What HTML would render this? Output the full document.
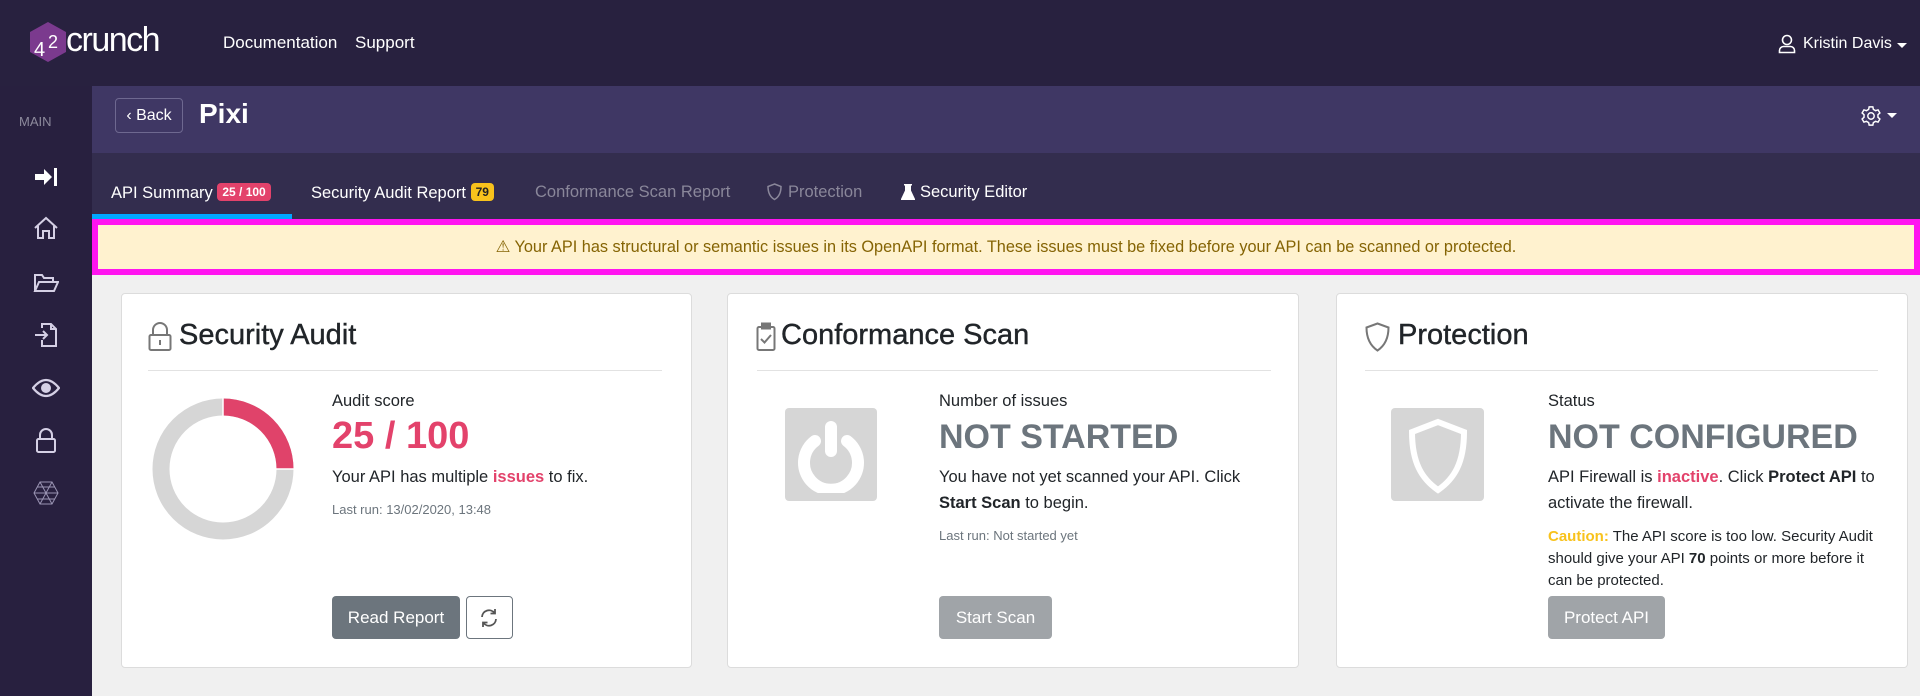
<!DOCTYPE html>
<html><head><meta charset="utf-8"><style>
*{box-sizing:border-box;margin:0;padding:0}
body{width:1920px;height:696px;overflow:hidden;font-family:"Liberation Sans",sans-serif;background:#f0f0f0;position:relative;color:#212529}
.a{position:absolute}
.top{left:0;top:0;width:1920px;height:86px;background:#28213f}
.side{left:0;top:86px;width:92px;height:610px;background:#28203f}
.ph{left:92px;top:86px;width:1828px;height:67px;background:#3f3764}
.tabs{left:92px;top:153px;width:1828px;height:66px;background:#332d4e}
.nav{color:#fff;font-size:17px;top:33px}
.tab{font-size:16.5px;top:183px;white-space:nowrap}
.badge{display:inline-block;font-size:12px;font-weight:bold;padding:2px 5px;border-radius:4px;vertical-align:2px}
.warn{left:92px;top:219px;width:1828px;height:56px;border:6px solid #ff14f0;background:#fff2cf;color:#856404;font-size:16.3px;text-align:center;line-height:44px;white-space:nowrap}
.card{top:293px;height:375px;background:#fff;border:1px solid #dcdcdc;border-radius:4px}
.ttl{font-size:29px;top:319px;white-space:nowrap;-webkit-text-stroke:0.4px #212529}
.hr{top:370px;height:1px;background:#e2e2e2}
.t16{font-size:16.5px;white-space:nowrap}
.big{font-size:34px;font-weight:bold;color:#6c757d;top:418px;white-space:nowrap}
.small{font-size:13px;color:#6c757d;white-space:nowrap}
.btn{top:596px;height:43px;border-radius:4px;color:#fff;font-size:17px;text-align:center;line-height:43px}
.box{top:408px;width:92px;height:93px;background:#d6d6d6;border-radius:4px}
</style></head><body>
<div class="a top"></div>
<svg class="a" style="left:28px;top:21px" width="40" height="42" viewBox="0 0 40 42"><polygon points="20,1 38,11 38,31 20,41 2,31 2,11" fill="#7b3a8e"/><text x="6" y="35" font-family="Liberation Sans" font-size="20" fill="#fff">4</text><text x="20" y="27" font-family="Liberation Sans" font-size="18" fill="#fff">2</text></svg>
<div class="a" style="left:66px;top:21px;color:#fff;font-size:34px;letter-spacing:-1.5px">crunch</div>
<div class="a nav" style="left:223px">Documentation</div>
<div class="a nav" style="left:355px">Support</div>
<svg class="a" style="left:1778px;top:34px" width="18" height="20" viewBox="0 0 18 20" fill="none" stroke="#fff" stroke-width="1.6"><circle cx="9" cy="6" r="4.5"/><path d="M1.5 18.5v-2a4 4 0 0 1 4-4h7a4 4 0 0 1 4 4v2z"/></svg>
<div class="a" style="left:1803px;top:35px;color:#fff;font-size:16px">Kristin Davis</div>
<div class="a" style="left:1897px;top:43px;border:5px solid transparent;border-top:5px solid #fff"></div>
<div class="a side"></div>
<div class="a" style="left:19px;top:114px;color:#8d8a9c;font-size:13px">MAIN</div>
<svg class="a" style="left:33px;top:166px" width="26" height="22" viewBox="0 0 26 22"><path d="M2 8h9V3l8 8-8 8v-5H2z" fill="#fff"/><rect x="21" y="2" width="3" height="18" fill="#fff"/></svg>
<svg class="a" style="left:33px;top:216px" width="26" height="24" viewBox="0 0 26 24" fill="none" stroke="#d5d0e5" stroke-width="2"><path d="M2 12L13 2l11 10M5 10v12h5v-7h6v7h5V10"/></svg>
<svg class="a" style="left:33px;top:272px" width="26" height="22" viewBox="0 0 26 22" fill="none" stroke="#d5d0e5" stroke-width="2"><path d="M2 19V3h7l2 3h9v4M2 19l4-9h19l-4 9z"/></svg>
<svg class="a" style="left:34px;top:322px" width="24" height="26" viewBox="0 0 24 26" fill="none" stroke="#d5d0e5" stroke-width="2"><path d="M8 6V2h9l5 5v17H8v-6M17 2v5h5M1 13h12M9 9l4 4-4 4"/></svg>
<svg class="a" style="left:32px;top:378px" width="28" height="20" viewBox="0 0 28 20"><path d="M1 10Q14-6 27 10Q14 26 1 10z" fill="none" stroke="#d5d0e5" stroke-width="2.2"/><circle cx="14" cy="10" r="5" fill="#d5d0e5"/></svg>
<svg class="a" style="left:35px;top:428px" width="22" height="26" viewBox="0 0 22 26" fill="none" stroke="#d5d0e5" stroke-width="2"><path d="M5 11V7a6 6 0 0 1 12 0v4"/><rect x="2" y="11" width="18" height="13" rx="1.5"/></svg>
<svg class="a" style="left:33px;top:481px" width="26" height="24" viewBox="0 0 26 24" fill="none" stroke="#9a94b3" stroke-width="1"><polygon points="7,1 19,1 25,12 19,23 7,23 1,12"/><path d="M7 1l12 22M19 1L7 23M1 12h24M4 6h18M4 18h18"/></svg>
<div class="a ph"></div>
<div class="a" style="left:115px;top:98px;width:68px;height:35px;border:1px solid #6e6890;border-radius:4px;color:#fff;font-size:16px;line-height:33px;text-align:center">‹ Back</div>
<div class="a" style="left:199px;top:98px;color:#fff;font-size:28px;font-weight:bold">Pixi</div>
<svg class="a" style="left:1860px;top:105px" width="22" height="22" viewBox="0 0 24 24" fill="none" stroke="#fff" stroke-width="1.6"><circle cx="12" cy="12" r="3.5"/><path d="M10 2h4l.6 2.8 2.4 1.4 2.7-.9 2 3.4-2.1 1.9v2.8l2.1 1.9-2 3.4-2.7-.9-2.4 1.4L14 22h-4l-.6-2.8-2.4-1.4-2.7.9-2-3.4 2.1-1.9v-2.8L2.3 8.7l2-3.4 2.7.9 2.4-1.4z"/></svg>
<div class="a" style="left:1887px;top:113px;border:5px solid transparent;border-top:5px solid #fff"></div>
<div class="a tabs"></div>
<div class="a tab" style="left:111px;color:#fff">API Summary <span class="badge" style="background:#e3426b;color:#fff">25 / 100</span></div>
<div class="a" style="left:92px;top:214px;width:200px;height:5px;background:#00a8ff"></div>
<div class="a tab" style="left:311px;color:#fff">Security Audit Report <span class="badge" style="background:#f8c21c;color:#222">79</span></div>
<div class="a tab" style="left:535px;color:#8a879a">Conformance Scan Report</div>
<svg class="a" style="left:767px;top:183px" width="15" height="18" viewBox="0 0 15 18" fill="none" stroke="#8a879a" stroke-width="1.5"><path d="M7.5 1L14 3.5c0 7-3 11-6.5 13C4 14.5 1 10.5 1 3.5z"/></svg>
<div class="a tab" style="left:788px;color:#8a879a">Protection</div>
<svg class="a" style="left:901px;top:183px" width="14" height="18" viewBox="0 0 14 18"><path d="M3 1h8v1.5H10v5l4 8.5v1H0v-1l4-8.5v-5H3z" fill="#fff"/></svg>
<div class="a tab" style="left:920px;color:#fff">Security Editor</div>
<div class="a warn">⚠ Your API has structural or semantic issues in its OpenAPI format. These issues must be fixed before your API can be scanned or protected.</div>

<div class="a card" style="left:121px;width:571px"></div>
<svg class="a" style="left:148px;top:322px" width="24" height="30" viewBox="0 0 24 30" fill="none" stroke="#777" stroke-width="2"><path d="M5 13V8a7 7 0 0 1 14 0v5"/><rect x="1.5" y="13" width="21" height="15" rx="1.5"/><path d="M12 18v5"/></svg>
<div class="a ttl" style="left:179px">Security Audit</div>
<div class="a hr" style="left:148px;width:514px"></div>
<svg class="a" style="left:152px;top:398px" width="142" height="142" viewBox="0 0 142 142"><circle cx="71" cy="71" r="62" fill="none" stroke="#d6d6d6" stroke-width="17"/><path d="M71 9A62 62 0 0 1 133 71" fill="none" stroke="#e0436a" stroke-width="17"/><path d="M71 0v20M122 71h20" stroke="#fff" stroke-width="1.5"/></svg>
<div class="a t16" style="left:332px;top:392px">Audit score</div>
<div class="a" style="left:332px;top:415px;font-size:38px;font-weight:bold;color:#e3426b">25 / 100</div>
<div class="a t16" style="left:332px;top:468px">Your API has multiple <b style="color:#e3426b">issues</b> to fix.</div>
<div class="a small" style="left:332px;top:502px">Last run: 13/02/2020, 13:48</div>
<div class="a btn" style="left:332px;width:128px;background:#6c757d">Read Report</div>
<div class="a" style="left:466px;top:596px;width:47px;height:43px;border:1px solid #6c757d;border-radius:4px"></div>
<svg class="a" style="left:479px;top:608px" width="20" height="20" viewBox="0 0 20 20" fill="none" stroke="#555" stroke-width="1.8"><path d="M3 9a7 7 0 0 1 12.5-4M17 11a7 7 0 0 1-12.5 4"/><path d="M16 1v4.5h-4.5M4 19v-4.5h4.5"/></svg>

<div class="a card" style="left:727px;width:572px"></div>
<svg class="a" style="left:756px;top:322px" width="20" height="30" viewBox="0 0 20 30" fill="none" stroke="#777" stroke-width="2"><rect x="1.5" y="5" width="17" height="23" rx="1.5"/><rect x="6" y="1.5" width="8" height="5" fill="#777"/><path d="M5 17l3.5 3.5L15 13"/></svg>
<div class="a ttl" style="left:781px">Conformance Scan</div>
<div class="a hr" style="left:757px;width:514px"></div>
<div class="a box" style="left:785px"></div>
<svg class="a" style="left:796px;top:417px" width="70" height="76" viewBox="0 0 70 76" fill="none" stroke="#fff" stroke-width="12" stroke-linecap="round"><path d="M19 24a27 27 0 1 0 32 0"/><path d="M35 10v24"/></svg>
<div class="a t16" style="left:939px;top:392px">Number of issues</div>
<div class="a big" style="left:939px">NOT STARTED</div>
<div class="a t16" style="left:939px;top:468px">You have not yet scanned your API. Click</div>
<div class="a t16" style="left:939px;top:494px"><b>Start Scan</b> to begin.</div>
<div class="a small" style="left:939px;top:528px">Last run: Not started yet</div>
<div class="a btn" style="left:939px;width:113px;background:#a0a4a8">Start Scan</div>

<div class="a card" style="left:1336px;width:572px"></div>
<svg class="a" style="left:1365px;top:322px" width="25" height="30" viewBox="0 0 25 30" fill="none" stroke="#777" stroke-width="2"><path d="M12.5 1.5L23.5 5.5c0 12-5 19-11 23C6.5 24.5 1.5 17.5 1.5 5.5z"/></svg>
<div class="a ttl" style="left:1398px">Protection</div>
<div class="a hr" style="left:1365px;width:513px"></div>
<div class="a box" style="left:1391px;width:93px"></div>
<svg class="a" style="left:1407px;top:418px" width="62" height="78" viewBox="0 0 62 78" fill="none" stroke="#fff" stroke-width="6"><path d="M31 4L57 14c0 31-10 47-26 58C15 61 5 45 5 14z"/></svg>
<div class="a t16" style="left:1548px;top:392px">Status</div>
<div class="a big" style="left:1548px">NOT CONFIGURED</div>
<div class="a t16" style="left:1548px;top:468px">API Firewall is <b style="color:#e3426b">inactive</b>. Click <b>Protect API</b> to</div>
<div class="a t16" style="left:1548px;top:494px">activate the firewall.</div>
<div class="a" style="left:1548px;top:526px;font-size:15px;line-height:22px;width:335px">
<b style="color:#f8c21c">Caution:</b> The API score is too low. Security Audit should give your API <b>70</b> points or more before it can be protected.</div>
<div class="a btn" style="left:1548px;width:117px;background:#a0a4a8">Protect API</div>
</body></html>
